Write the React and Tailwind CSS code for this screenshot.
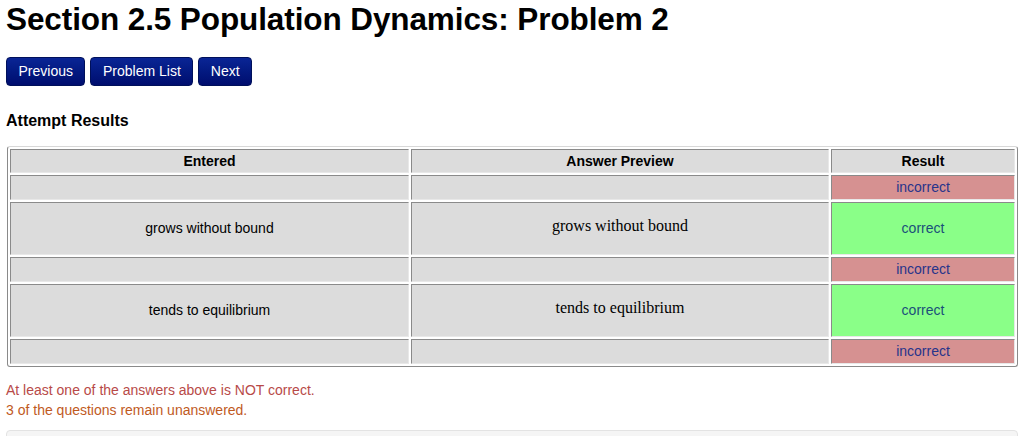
import React from 'react';

const rows = [
  { entered: '', preview: '', correct: false },
  { entered: 'grows without bound', preview: 'grows without bound', correct: true },
  { entered: '', preview: '', correct: false },
  { entered: 'tends to equilibrium', preview: 'tends to equilibrium', correct: true },
  { entered: '', preview: '', correct: false },
];

const cell = 'border border-t-[#8a8a8a] border-l-[#8a8a8a] border-r-[#e8e8e8] border-b-[#e8e8e8] text-center align-middle p-0';

const NavButton = ({ children }) => (
  <button className="h-[29px] px-[11.5px] rounded-[4px] border border-[#00105a] bg-gradient-to-b from-[#0a2595] to-[#000d6e] text-white text-[14px] leading-none">
    {children}
  </button>
);

export default function App() {
  return (
    <div className="bg-white w-[1024px] h-[436px] overflow-hidden px-[6px] font-['Liberation_Sans',Arial,sans-serif] text-black">
      <h1 className="text-[31.5px] font-bold leading-none pt-[4px] tracking-[-0.1px]">
        Section 2.5 Population Dynamics: Problem 2
      </h1>

      {/* Navigation */}
      <div className="flex gap-[5px] mt-[21px]">
        <NavButton>Previous</NavButton>
        <NavButton>Problem List</NavButton>
        <NavButton>Next</NavButton>
      </div>

      <h2 className="text-[16px] font-bold leading-none mt-[27px]">Attempt Results</h2>

      {/* Results table */}
      <table className="mt-[17px] ml-px border-separate border-spacing-[2px] border border-t-[#d8d8d8] border-l-[#8a8a8a] border-r-[#8a8a8a] border-b-[#8a8a8a] rounded-[3px] w-[1011px] text-[14px] leading-[16px]">
        <thead>
          <tr>
            <th className={`${cell} h-[24px] w-[399px] bg-[#dcdcdc] font-bold`}>Entered</th>
            <th className={`${cell} h-[24px] w-[418px] bg-[#dcdcdc] font-bold`}>Answer Preview</th>
            <th className={`${cell} h-[24px] bg-[#dcdcdc] font-bold`}>Result</th>
          </tr>
        </thead>
        <tbody>
          {rows.map((r, i) => (
            <tr key={i}>
              <td className={`${cell} ${r.correct ? 'h-[53px]' : 'h-[25px]'} bg-[#dcdcdc]`}>{r.entered}</td>
              <td className={`${cell} ${r.correct ? 'h-[53px]' : 'h-[25px]'} bg-[#dcdcdc] font-['Liberation_Serif','Times_New_Roman',serif] text-[16px] leading-[16px] pb-[5px]`}>
                {r.preview}
              </td>
              <td
                className={`${cell} ${
                  r.correct ? 'h-[53px] bg-[#8aff88] text-[#1b4f7a]' : 'h-[25px] bg-[#d69191] text-[#27348b]'
                }`}
              >
                {r.correct ? 'correct' : 'incorrect'}
              </td>
            </tr>
          ))}
        </tbody>
      </table>

      {/* Messages */}
      <div className="mt-[13px] text-[14px] leading-[20px]">
        <div className="text-[#b84a48]">At least one of the answers above is NOT correct.</div>
        <div className="text-[#bf5a1e]">3 of the questions remain unanswered.</div>
      </div>

      <div className="mt-[10px] h-[40px] w-[1012px] bg-[#f5f5f5] border border-[#e3e3e3] rounded-[4px]"></div>
    </div>
  );
}
